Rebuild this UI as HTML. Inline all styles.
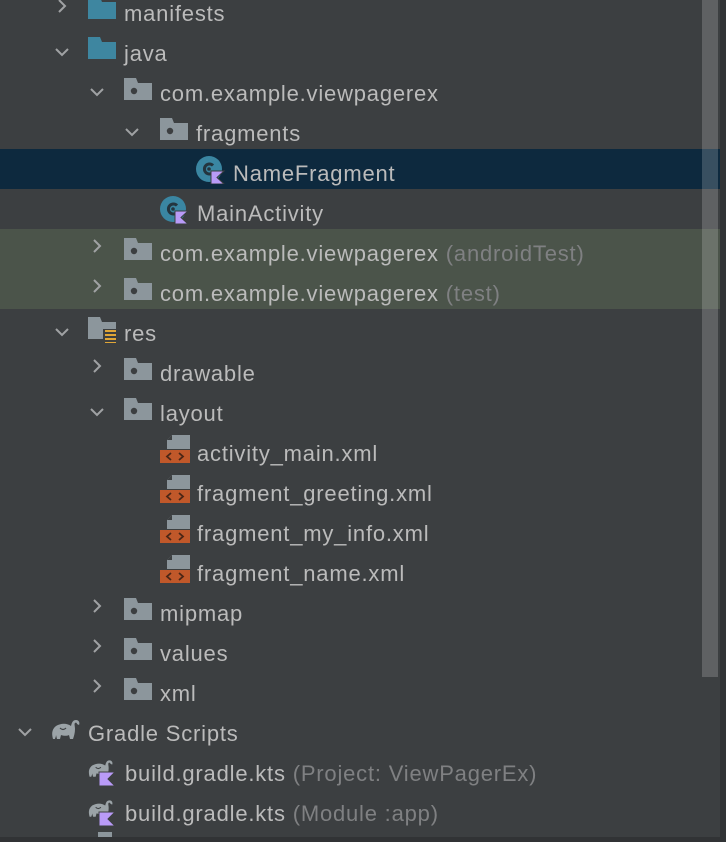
<!DOCTYPE html>
<html><head><meta charset="utf-8"><style>
html,body{margin:0;padding:0;width:726px;height:842px;overflow:hidden;background:#313335;}
#p{position:absolute;left:0;top:0;width:720px;height:837px;background:#3c3f41;overflow:hidden;}
.r{position:absolute;left:0;width:720px;height:40px;}
.t{position:absolute;top:0;height:40px;line-height:42px;font-family:"Liberation Sans",sans-serif;font-size:22px;letter-spacing:0.8px;color:#bbbbbb;white-space:nowrap;}
.t i{font-style:normal;color:#7f8082;}
svg{position:absolute;overflow:visible;}
#sb{position:absolute;left:702px;top:0;width:16px;height:677px;background:rgba(255,255,255,0.18);}
</style></head><body>
<svg width="0" height="0" style="position:absolute">
<defs>
<symbol id="fb" viewBox="0 0 28 22"><path d="M0 0h12l2 5h14v17H0z" fill="#3e86a0"/></symbol>
<symbol id="pk" viewBox="0 0 28 22"><path d="M0 0h12l2 5h14v17H0z" fill="#8c969c"/><circle cx="10" cy="13" r="3.2" fill="#3c3f41"/></symbol>
<symbol id="rs" viewBox="0 0 28 26"><path d="M0 0h12l2 5h14v17H0z" fill="#8c969c"/><rect x="15" y="12" width="13" height="14" fill="#3c3f41"/><g fill="#e0a637"><rect x="17" y="13" width="11" height="2"/><rect x="17" y="17" width="11" height="2"/><rect x="17" y="21" width="11" height="2"/><rect x="17" y="25" width="11" height="1.5"/></g></symbol>
<symbol id="cl" viewBox="0 0 30 28"><circle cx="13" cy="13" r="13" fill="#3a86a2"/><path d="M17 9.5a5 5 0 1 0 0 7" stroke="#24353f" stroke-width="3" fill="none"/><circle cx="13" cy="13" r="1.8" fill="#24353f"/><path d="M15 15h13l-7 6.5 7 6.5H15z" fill="#b99bf8" stroke="#3c3f41" stroke-width="1"/></symbol>
<symbol id="xm" viewBox="0 0 30 28"><path d="M12 0h18v14H7V5z" fill="#8c969c"/><path d="M7 5h5V0z" fill="#3c3f41"/><rect x="0" y="15" width="30" height="13" fill="#c0582a"/><path d="M11 18l-4 3.5 4 3.5M19 18l4 3.5-4 3.5" stroke="#4a2616" stroke-width="1.8" fill="none"/></symbol>
<symbol id="el" viewBox="0 0 30 22"><path d="M3 20c-1-4-2-9 3-13 5-3 11-3 15 0 1-4 2-6 5-6 3 0 4 3 3 5l-2-1c0-1-1-2-2-1-1 1 0 3 0 6 0 4-1 7-2 10h-3l-1-4c-2 1-5 1-8 0l-1 4h-3l-1-4c0 2-1 3-1 4z" fill="#9ba3a7"/><path d="M10 9c2 2 4 2 6 0" stroke="#3c3f41" stroke-width="1.2" fill="none"/></symbol>
<symbol id="ek" viewBox="0 0 30 28"><use href="#el" x="0" y="0" width="26" height="20"/><path d="M12 13h16l-7 7 7 7H12z" fill="#b99bf8" stroke="#3c3f41" stroke-width="1"/></symbol>
<symbol id="cr" viewBox="0 0 14 14"><path d="M4 1l6 6-6 6" stroke="#a0a2a4" stroke-width="2" fill="none"/></symbol>
<symbol id="cd" viewBox="0 0 14 14"><path d="M1 4l6 6 6-6" stroke="#a0a2a4" stroke-width="2" fill="none"/></symbol>
</defs></svg>
<div id="p">
<div class="r" style="top:149px;background:#0d293e"></div>
<div class="r" style="top:229px;height:80px;background:#4b544a"></div>

<svg style="left:55px;top:-1px" width="14" height="14"><use href="#cr"/></svg>
<svg style="left:88px;top:-3px" width="28" height="22"><use href="#fb"/></svg>
<div class="t" style="left:124px;top:-7px">manifests</div>
<svg style="left:55px;top:45px" width="14" height="14"><use href="#cd"/></svg>
<svg style="left:88px;top:37px" width="28" height="22"><use href="#fb"/></svg>
<div class="t" style="left:124px;top:33px">java</div>
<svg style="left:90px;top:85px" width="14" height="14"><use href="#cd"/></svg>
<svg style="left:124px;top:78px" width="28" height="22"><use href="#pk"/></svg>
<div class="t" style="left:160px;top:73px">com.example.viewpagerex</div>
<svg style="left:125px;top:125px" width="14" height="14"><use href="#cd"/></svg>
<svg style="left:160px;top:118px" width="28" height="22"><use href="#pk"/></svg>
<div class="t" style="left:196px;top:113px">fragments</div>
<svg style="left:196px;top:156px" width="30" height="28"><use href="#cl"/></svg>
<div class="t" style="left:233px;top:153px">NameFragment</div>
<svg style="left:160px;top:196px" width="30" height="28"><use href="#cl"/></svg>
<div class="t" style="left:197px;top:193px">MainActivity</div>
<svg style="left:90px;top:239px" width="14" height="14"><use href="#cr"/></svg>
<svg style="left:124px;top:238px" width="28" height="22"><use href="#pk"/></svg>
<div class="t" style="left:160px;top:233px">com.example.viewpagerex <i>(androidTest)</i></div>
<svg style="left:90px;top:279px" width="14" height="14"><use href="#cr"/></svg>
<svg style="left:124px;top:278px" width="28" height="22"><use href="#pk"/></svg>
<div class="t" style="left:160px;top:273px">com.example.viewpagerex <i>(test)</i></div>
<svg style="left:55px;top:325px" width="14" height="14"><use href="#cd"/></svg>
<svg style="left:88px;top:317px" width="28" height="26"><use href="#rs"/></svg>
<div class="t" style="left:124px;top:313px">res</div>
<svg style="left:90px;top:359px" width="14" height="14"><use href="#cr"/></svg>
<svg style="left:124px;top:358px" width="28" height="22"><use href="#pk"/></svg>
<div class="t" style="left:160px;top:353px">drawable</div>
<svg style="left:90px;top:405px" width="14" height="14"><use href="#cd"/></svg>
<svg style="left:124px;top:398px" width="28" height="22"><use href="#pk"/></svg>
<div class="t" style="left:160px;top:393px">layout</div>
<svg style="left:160px;top:435px" width="30" height="28"><use href="#xm"/></svg>
<div class="t" style="left:197px;top:433px">activity_main.xml</div>
<svg style="left:160px;top:475px" width="30" height="28"><use href="#xm"/></svg>
<div class="t" style="left:197px;top:473px">fragment_greeting.xml</div>
<svg style="left:160px;top:515px" width="30" height="28"><use href="#xm"/></svg>
<div class="t" style="left:197px;top:513px">fragment_my_info.xml</div>
<svg style="left:160px;top:555px" width="30" height="28"><use href="#xm"/></svg>
<div class="t" style="left:197px;top:553px">fragment_name.xml</div>
<svg style="left:90px;top:599px" width="14" height="14"><use href="#cr"/></svg>
<svg style="left:124px;top:598px" width="28" height="22"><use href="#pk"/></svg>
<div class="t" style="left:160px;top:593px">mipmap</div>
<svg style="left:90px;top:639px" width="14" height="14"><use href="#cr"/></svg>
<svg style="left:124px;top:638px" width="28" height="22"><use href="#pk"/></svg>
<div class="t" style="left:160px;top:633px">values</div>
<svg style="left:90px;top:679px" width="14" height="14"><use href="#cr"/></svg>
<svg style="left:124px;top:678px" width="28" height="22"><use href="#pk"/></svg>
<div class="t" style="left:160px;top:673px">xml</div>
<svg style="left:18px;top:725px" width="14" height="14"><use href="#cd"/></svg>
<svg style="left:50px;top:719px" width="30" height="22"><use href="#el"/></svg>
<div class="t" style="left:88px;top:713px">Gradle Scripts</div>
<svg style="left:87px;top:759px" width="30" height="28"><use href="#ek"/></svg>
<div class="t" style="left:125px;top:753px">build.gradle.kts <i>(Project: ViewPagerEx)</i></div>
<svg style="left:87px;top:799px" width="30" height="28"><use href="#ek"/></svg>
<div class="t" style="left:125px;top:793px">build.gradle.kts <i>(Module :app)</i></div>
<div style="position:absolute;left:98px;top:832px;width:14px;height:5px;background:#8c969c"></div>
<div id="sb"></div>
</div>
</body></html>
